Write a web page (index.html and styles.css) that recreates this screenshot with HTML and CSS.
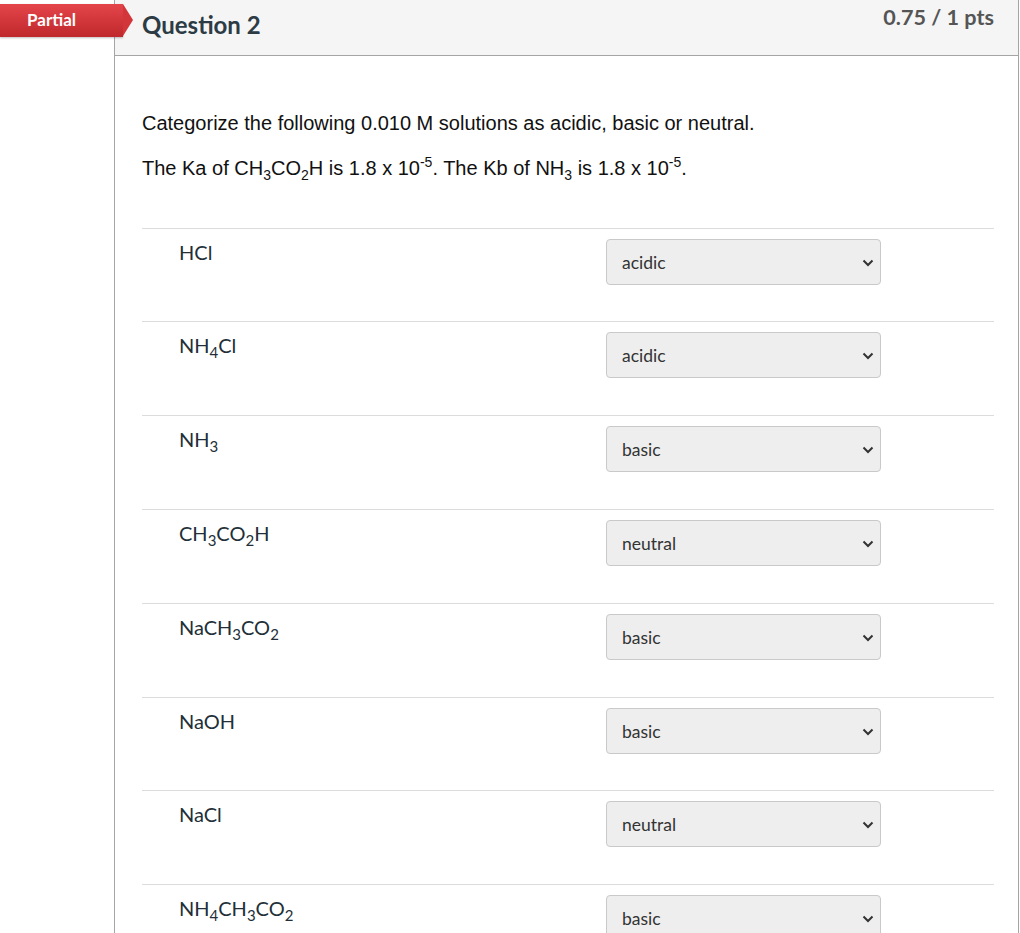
FILE: index.html
```html
<!DOCTYPE html>
<html>
<head>
<meta charset="utf-8">
<link rel="stylesheet" href="styles.css">
</head>
<body>
<div class="page">
  <div class="gutter"></div>
  <div class="question">
    <div class="banner"><span>Partial</span></div>
    <div class="header">
      <div class="title">Question 2</div>
      <div class="pts">0.75 / 1 pts</div>
    </div>
    <div class="body">
      <p class="text">Categorize the following 0.010 M solutions as acidic, basic or neutral.</p>
      <p class="text">The Ka of CH<sub>3</sub>CO<sub>2</sub>H is 1.8 x 10<sup>-5</sup>. The Kb of NH<sub>3</sub> is 1.8 x 10<sup>-5</sup>.</p>
      <div class="rows">
        <div class="row"><div class="label">HCl</div><div class="select"><span>acidic</span><svg width="12" height="8" viewBox="0 0 12 8"><path d="M1.5 1.5 L6 6 L10.5 1.5" fill="none" stroke="#333" stroke-width="2"/></svg></div></div>
        <div class="row"><div class="label">NH<sub>4</sub>Cl</div><div class="select"><span>acidic</span><svg width="12" height="8" viewBox="0 0 12 8"><path d="M1.5 1.5 L6 6 L10.5 1.5" fill="none" stroke="#333" stroke-width="2"/></svg></div></div>
        <div class="row"><div class="label">NH<sub>3</sub></div><div class="select"><span>basic</span><svg width="12" height="8" viewBox="0 0 12 8"><path d="M1.5 1.5 L6 6 L10.5 1.5" fill="none" stroke="#333" stroke-width="2"/></svg></div></div>
        <div class="row"><div class="label">CH<sub>3</sub>CO<sub>2</sub>H</div><div class="select"><span>neutral</span><svg width="12" height="8" viewBox="0 0 12 8"><path d="M1.5 1.5 L6 6 L10.5 1.5" fill="none" stroke="#333" stroke-width="2"/></svg></div></div>
        <div class="row"><div class="label">NaCH<sub>3</sub>CO<sub>2</sub></div><div class="select"><span>basic</span><svg width="12" height="8" viewBox="0 0 12 8"><path d="M1.5 1.5 L6 6 L10.5 1.5" fill="none" stroke="#333" stroke-width="2"/></svg></div></div>
        <div class="row"><div class="label">NaOH</div><div class="select"><span>basic</span><svg width="12" height="8" viewBox="0 0 12 8"><path d="M1.5 1.5 L6 6 L10.5 1.5" fill="none" stroke="#333" stroke-width="2"/></svg></div></div>
        <div class="row"><div class="label">NaCl</div><div class="select"><span>neutral</span><svg width="12" height="8" viewBox="0 0 12 8"><path d="M1.5 1.5 L6 6 L10.5 1.5" fill="none" stroke="#333" stroke-width="2"/></svg></div></div>
        <div class="row"><div class="label">NH<sub>4</sub>CH<sub>3</sub>CO<sub>2</sub></div><div class="select"><span>basic</span><svg width="12" height="8" viewBox="0 0 12 8"><path d="M1.5 1.5 L6 6 L10.5 1.5" fill="none" stroke="#333" stroke-width="2"/></svg></div></div>
      </div>
    </div>
  </div>
</div>
</body>
</html>
```

FILE: styles.css
```css
html, body {
  margin: 0;
  padding: 0;
  background: #fff;
}
body {
  font-family: Lato, "Noto Sans", sans-serif;
  color: #2d3b45;
  overflow: hidden;
  height: 933px;
}
.page {
  display: flex;
  width: 1020px;
}
.gutter {
  width: 114px;
  flex: none;
}
.question {
  position: relative;
  width: 903px;
  border-left: 1px solid #a5a5a5;
  border-right: 1px solid #a5a5a5;
  min-height: 1000px;
}
.banner {
  position: absolute;
  left: -115px;
  top: 4px;
  width: 123px;
  height: 33px;
  background: linear-gradient(#e4454a, #bf282c);
  box-shadow: 0 1px 2px rgba(0,0,0,0.25);
  z-index: 2;
}
.banner::after {
  content: "";
  position: absolute;
  right: -10px;
  top: 0;
  border-top: 16.5px solid transparent;
  border-bottom: 16.5px solid transparent;
  border-left: 10px solid #d2353a;
}
.banner span {
  position: absolute;
  left: 27px;
  top: 5px;
  color: #fff;
  font-weight: 700;
  font-size: 17px;
}
.header {
  height: 55px;
  background: #f5f5f5;
  border-bottom: 1px solid #a5a5a5;
  display: flex;
  justify-content: space-between;
  padding: 0 24px 0 27px;
}
.title {
  font-weight: 700;
  font-size: 24px;
  margin-top: 10px;
  color: #2d3b45;
}
.pts {
  font-weight: 700;
  font-size: 21.6px;
  color: #555;
  margin-top: 4px;
}
.body {
  padding: 55px 24px 0 27px;
}
.text {
  font-family: "Liberation Sans", Arial, sans-serif;
  font-size: 20px;
  color: #111;
  margin: 0 0 21px 0;
  line-height: 24px;
}
.text sub, .text sup {
  font-size: 14px;
  line-height: 0;
}
.rows {
  margin-top: 48px;
}
.row {
  display: flex;
  box-sizing: border-box;
  border-top: 1px solid #dcdcdc;
  height: 94px;
}
.row:nth-child(1), .row:nth-child(6) { height: 93px; }
.label {
  width: 427px;
  padding-left: 37px;
  padding-top: 11px;
  font-size: 20px;
  color: #222f38;
  line-height: 24px;
}
.label sub {
  font-size: 15px;
  line-height: 0;
}
.select {
  margin-top: 10px;
  height: 44px;
  background: #eeeeee;
  border: 1px solid #c9c9c9;
  border-radius: 4px;
  display: flex;
  align-items: center;
  justify-content: space-between;
  padding: 0 6px 0 15px;
  box-sizing: content-box;
  width: 252px;
  font-size: 17.5px;
  color: #333;
}
.select svg {
  margin-top: 2px;
}
```
